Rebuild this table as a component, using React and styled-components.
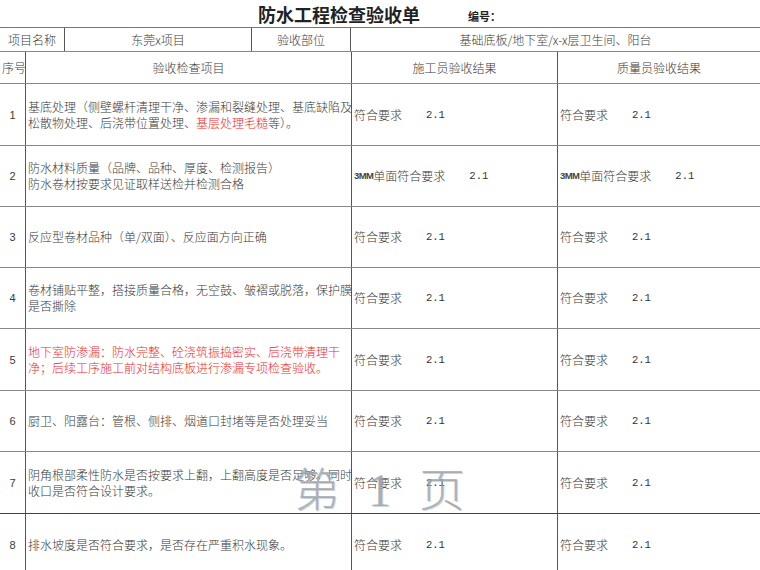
import React from "react";
import styled, { createGlobalStyle } from "styled-components";

const GlobalStyle = createGlobalStyle`
  html, body {
    margin: 0;
    padding: 0;
    background: #fff;
  }
  body {
    font-family: "Noto Sans CJK SC", "Liberation Sans", sans-serif;
    color: #333;
    overflow: hidden;
  }
`;

const Page = styled.div`
  position: relative;
  width: 760px;
  height: 570px;
  overflow: hidden;
  background: #fff;
`;

const TitleBar = styled.div`
  height: 27px;
  display: flex;
  align-items: center;
  padding-left: 258px;
  gap: 48px;
  box-sizing: border-box;
`;

const Title = styled.div`
  font-size: 18px;
  font-weight: 700;
  color: #222;
  line-height: 1;
`;

const Serial = styled.div`
  font-size: 11px;
  font-weight: 700;
  color: #222;
  margin-top: 4px;
`;

const Sheet = styled.div`
  border-top: 1px solid #777;
`;

const Row = styled.div`
  display: grid;
  grid-template-columns: ${(p) => p.$cols};
  height: ${(p) => p.$h}px;
  box-sizing: border-box;
  border-bottom: 1px solid ${(p) => (p.$dark ? "#444" : "#888")};
`;

const Cell = styled.div`
  display: flex;
  align-items: center;
  justify-content: ${(p) => (p.$center ? "center" : "flex-start")};
  padding: 0 ${(p) => (p.$center ? 0 : 2)}px;
  border-right: ${(p) => (p.$last ? "none" : "1px solid #555")};
  font-size: 12px;
  font-weight: 300;
  line-height: 16px;
  color: ${(p) => (p.$red ? "#f02828" : "#3a3a3a")};
  white-space: nowrap;
  overflow: hidden;
`;

const Num = styled(Cell)`
  font-family: "Liberation Sans", sans-serif;
  font-size: 11px;
  font-weight: 400;
`;

const Red = styled.span`
  color: #f02828;
`;

const Score = styled.span`
  font-family: "Liberation Mono", monospace;
  font-size: 10.5px;
  font-weight: 400;
  color: #333;
  margin-left: 24px;
`;

const Thick = styled.span`
  font-family: "Liberation Sans", sans-serif;
  font-size: 9.5px;
  font-weight: 700;
  color: #444;
  letter-spacing: -0.6px;
`;

const Watermark = styled.div`
  position: absolute;
  left: 294px;
  top: 468px;
  display: flex;
  align-items: baseline;
  gap: 28px;
  font-family: "Liberation Serif", "Noto Sans CJK SC", serif;
  font-weight: 300;
  font-size: 46px;
  line-height: 1;
  color: rgba(160, 160, 160, 0.75);
  text-shadow: 1px 1px 0 rgba(150, 180, 210, 0.55);
  pointer-events: none;
`;

const TOP_COLS = "65px 187px 99px 1fr";
const BODY_COLS = "26px 326px 206px 1fr";

const Result = ({ prefix }) => (
  <>
    {prefix && <Thick>3MM</Thick>}
    {prefix ? "单面符合要求" : "符合要求"}
    <Score>2.1</Score>
  </>
);

const rows = [
  {
    h: 62,
    text: (
      <>
        基底处理（侧壁螺杆清理干净、渗漏和裂缝处理、基底缺陷及
        <br />
        松散物处理、后浇带位置处理、<Red>基层处理毛糙</Red>等）。
      </>
    ),
  },
  {
    h: 61,
    prefix: true,
    text: (
      <>
        防水材料质量（品牌、品种、厚度、检测报告）
        <br />
        防水卷材按要求见证取样送检并检测合格
      </>
    ),
  },
  { h: 61, text: "反应型卷材品种（单/双面）、反应面方向正确" },
  {
    h: 61,
    text: (
      <>
        卷材铺贴平整，搭接质量合格，无空鼓、皱褶或脱落，保护膜
        <br />
        是否撕除
      </>
    ),
  },
  {
    h: 62,
    red: true,
    text: (
      <>
        地下室防渗漏：防水完整、砼浇筑振捣密实、后浇带清理干
        <br />
        净；后续工序施工前对结构底板进行渗漏专项检查验收。
      </>
    ),
  },
  { h: 61, text: "厨卫、阳露台：管根、侧排、烟道口封堵等是否处理妥当" },
  {
    h: 62,
    dark: true,
    text: (
      <>
        阴角根部柔性防水是否按要求上翻，上翻高度是否足够，同时
        <br />
        收口是否符合设计要求。
      </>
    ),
  },
  { h: 62, text: "排水坡度是否符合要求，是否存在严重积水现象。" },
];

export default function App() {
  return (
    <Page>
      <GlobalStyle />
      <TitleBar>
        <Title>防水工程检查验收单</Title>
        <Serial>编号：</Serial>
      </TitleBar>
      <Sheet>
        <Row $cols={TOP_COLS} $h={24}>
          <Cell $center>项目名称</Cell>
          <Cell $center>东莞x项目</Cell>
          <Cell $center>验收部位</Cell>
          <Cell $center $last>
            基础底板/地下室/x-x层卫生间、阳台
          </Cell>
        </Row>
        <Row $cols={BODY_COLS} $h={32}>
          <Cell>序号</Cell>
          <Cell $center>验收检查项目</Cell>
          <Cell $center>施工员验收结果</Cell>
          <Cell $center $last>
            质量员验收结果
          </Cell>
        </Row>
        {rows.map((r, i) => (
          <Row key={i} $cols={BODY_COLS} $h={r.h} $dark={r.dark}>
            <Num $center>{i + 1}</Num>
            <Cell $red={r.red}>
              <div>{r.text}</div>
            </Cell>
            <Cell>
              <Result prefix={r.prefix} />
            </Cell>
            <Cell $last>
              <Result prefix={r.prefix} />
            </Cell>
          </Row>
        ))}
      </Sheet>
      <Watermark>
        <span>第</span>
        <span>1</span>
        <span>页</span>
      </Watermark>
    </Page>
  );
}
